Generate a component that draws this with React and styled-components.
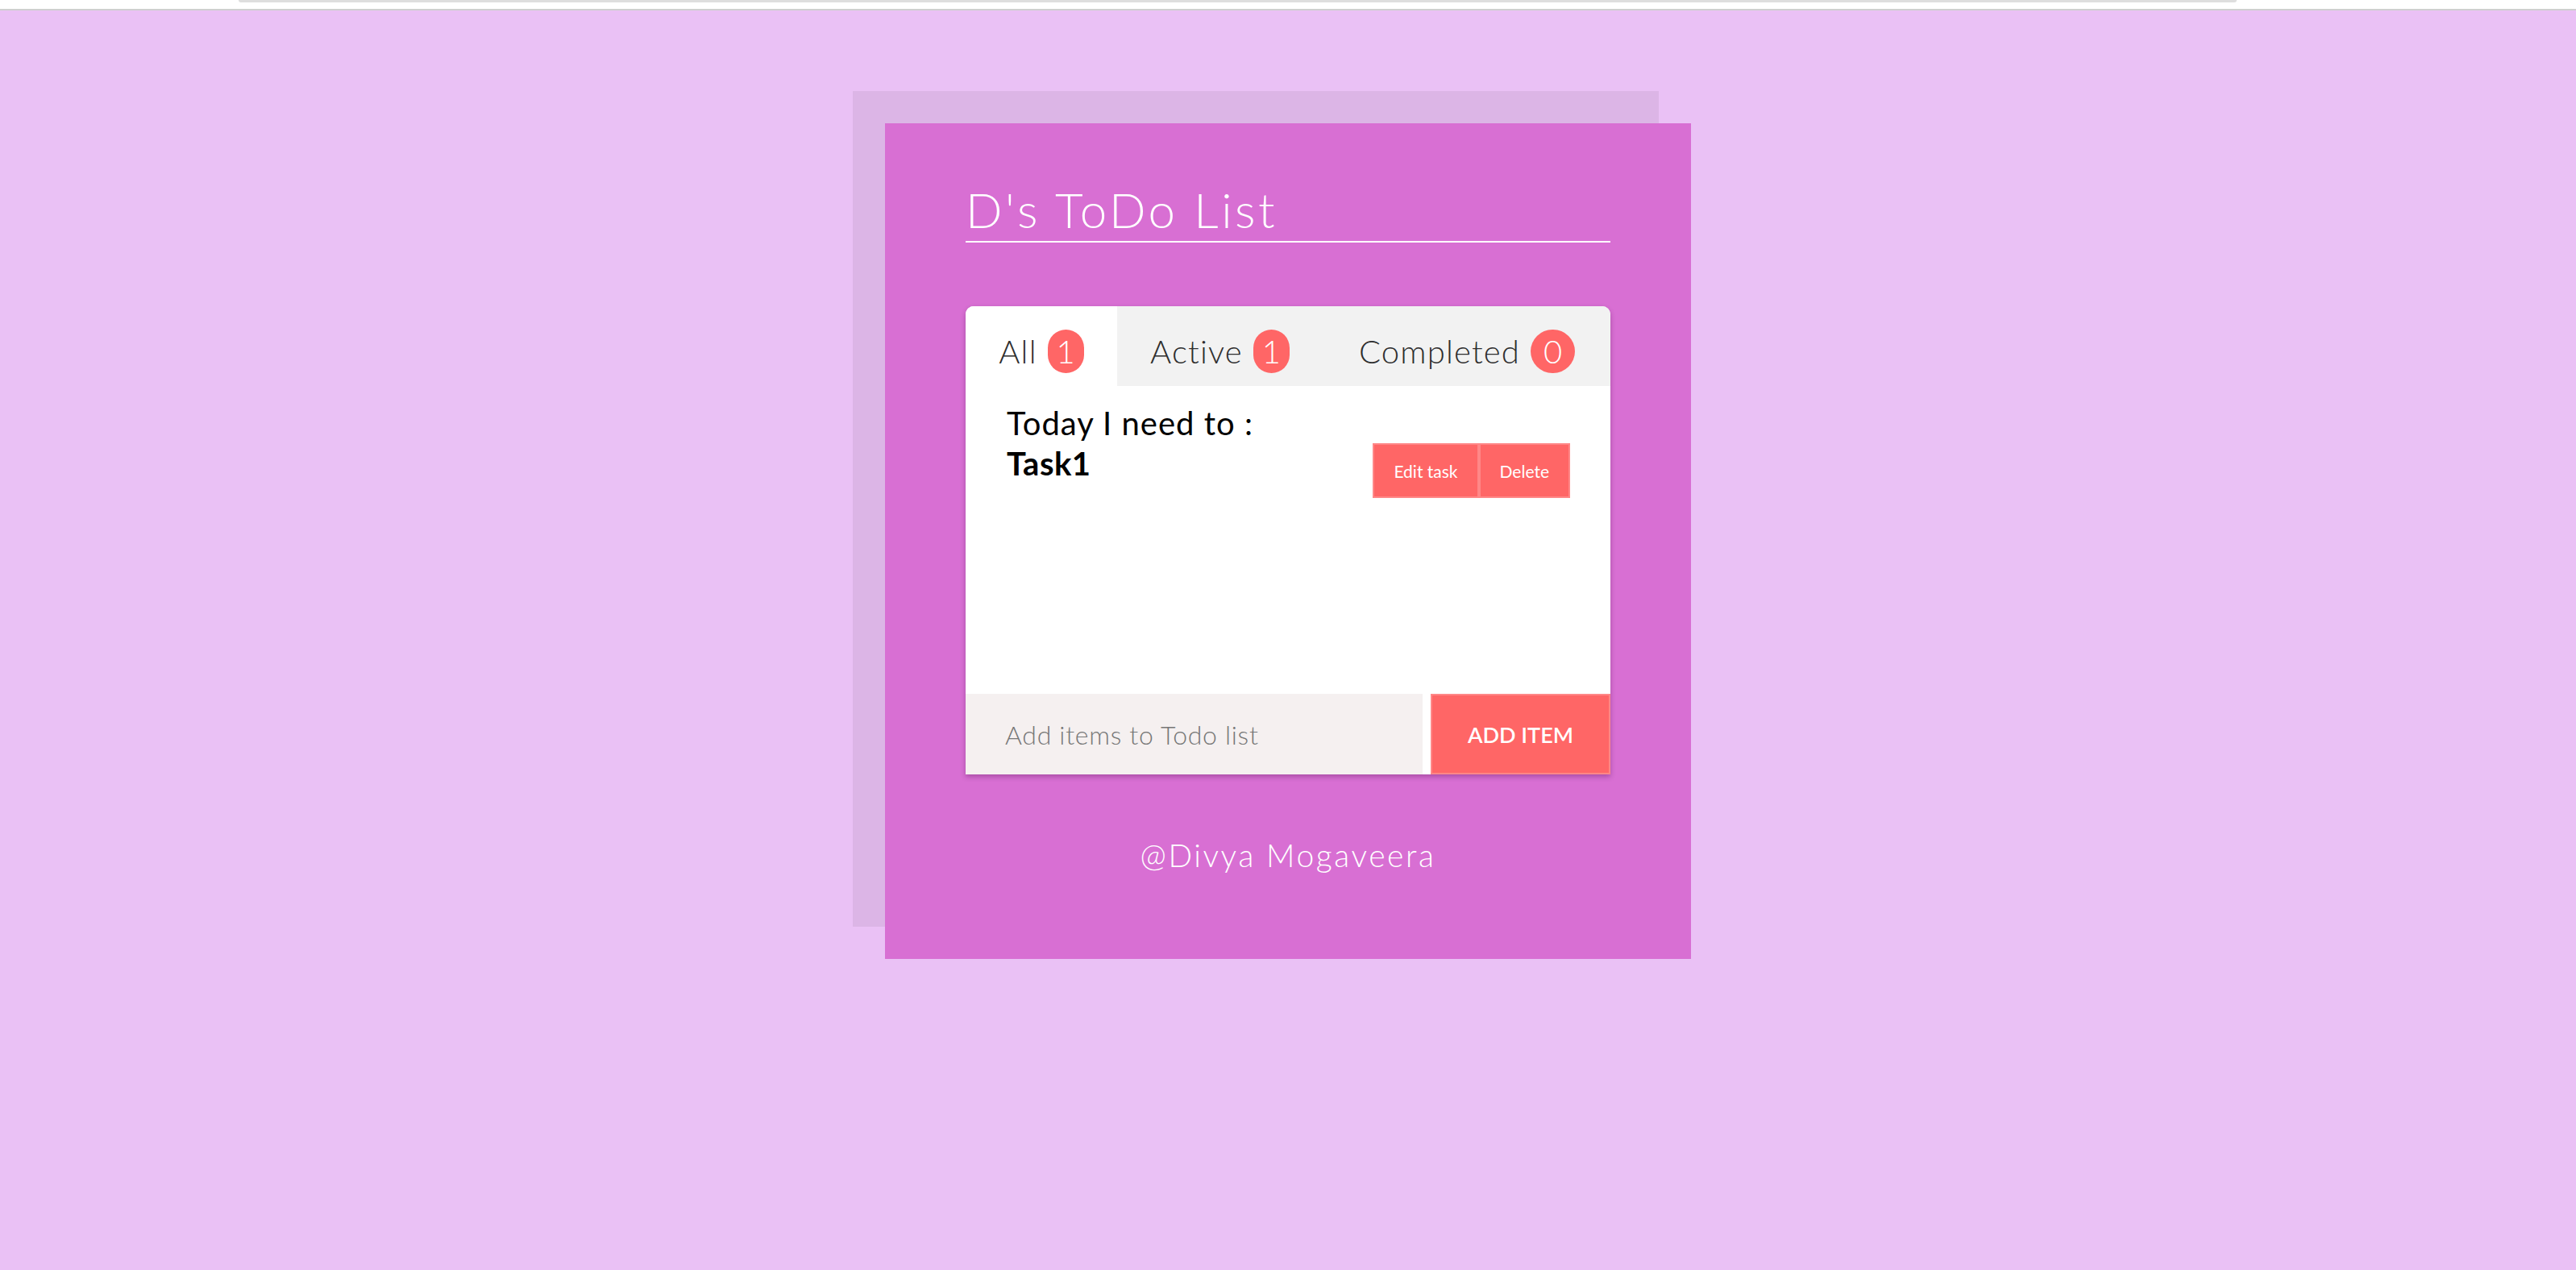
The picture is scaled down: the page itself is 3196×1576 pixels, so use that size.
import React from 'react';
import styled, { createGlobalStyle } from 'styled-components';

const GlobalStyle = createGlobalStyle`
  html, body {
    margin: 0;
    padding: 0;
    background: #eac1f5;
    font-family: Lato, "Noto Sans", sans-serif;
  }
  * {
    box-sizing: border-box;
  }
`;

// Styled Components
const TopStrip = styled.div`
  height: 13px;
  background: #ffffff;
  border-bottom: 2px solid #cfcfcf;
`;

const BrowserBar = styled.div`
  margin-left: 296px;
  width: 2479px;
  height: 3px;
  background: #dedede;
  border-radius: 0 0 8px 8px;
`;

const Page = styled.div`
  padding-top: 140px;
  padding-bottom: 200px;
  display: flex;
  justify-content: center;
`;

const Card = styled.div`
  width: 1000px;
  padding: 72px 100px 105px;
  background: #d86fd3;
  box-shadow: -40px -40px 0 0 #dcb5e6;
`;

const Title = styled.h1`
  margin: 0;
  padding-bottom: 4px;
  font-size: 60px;
  line-height: 70px;
  font-weight: 300;
  letter-spacing: 3.5px;
  color: #ffffff;
  border-bottom: 2px solid #ffffff;
`;

const TodoBox = styled.div`
  margin-top: 79px;
  background: #ffffff;
  border-radius: 10px 10px 0 0;
  box-shadow: 0 3px 6px rgba(60, 0, 60, 0.3);
`;

const TabList = styled.div`
  display: flex;
  height: 99px;
  background: #f2f2f2;
  border-radius: 10px 10px 0 0;
  overflow: hidden;
`;

const Tab = styled.div`
  flex: none;
  width: ${props => props.width}px;
  display: flex;
  align-items: center;
  justify-content: center;
  padding-top: 12px;
  background: ${props => (props.selected ? '#ffffff' : 'transparent')};
  font-size: 40px;
  font-weight: 300;
  letter-spacing: 1.2px;
  color: #2e2e2e;
`;

const Badge = styled.span`
  display: inline-flex;
  align-items: center;
  justify-content: center;
  margin-left: 13px;
  width: ${props => (props.round ? 55 : 45)}px;
  height: 54px;
  border-radius: 27px;
  background: #ff6666;
  color: #ffffff;
  font-size: 40px;
  font-weight: 300;
  letter-spacing: 0;
`;

const TabPanel = styled.div`
  height: 382px;
  padding: 21px 50px 0 51px;
`;

const TaskRow = styled.div`
  display: flex;
  justify-content: space-between;
  align-items: flex-start;
`;

const TaskText = styled.div`
  font-size: 40px;
  line-height: 50px;
  letter-spacing: 1px;
  color: #000000;
  & > strong {
    display: block;
    font-weight: 700;
    letter-spacing: 0.5px;
  }
`;

const Actions = styled.div`
  display: flex;
  margin-top: 50px;
`;

const SmallButton = styled.button`
  height: 68px;
  padding: 0 ${props => props.pad}px;
  border: 2px solid #ff8787;
  background: #ff6666;
  color: #ffffff;
  font-family: Lato, "Noto Sans", sans-serif;
  font-size: 21px;
  font-weight: 400;
  cursor: pointer;
`;

const AddForm = styled.form`
  display: flex;
  height: 100px;
`;

const AddInput = styled.input`
  flex: 1;
  margin-right: 10px;
  padding: 0 0 0 49px;
  border: none;
  outline: none;
  background: #f5f0f0;
  font-family: Lato, "Noto Sans", sans-serif;
  font-size: 32px;
  font-weight: 300;
  letter-spacing: 0.7px;
  color: #333333;
  &::placeholder {
    color: #777777;
  }
`;

const AddButton = styled.button`
  width: 223px;
  border: 2px solid #ff8787;
  background: #ff6666;
  color: #ffffff;
  font-family: Lato, "Noto Sans", sans-serif;
  font-size: 27px;
  font-weight: 600;
  cursor: pointer;
`;

const Footer = styled.p`
  margin: 76px 0 0;
  text-align: center;
  font-size: 39px;
  line-height: 48px;
  font-weight: 300;
  letter-spacing: 2.6px;
  color: #ffffff;
`;

const tabs = [
  { label: 'All', count: 1, width: 188 },
  { label: 'Active', count: 1, width: 255 },
  { label: 'Completed', count: 0, width: 358 },
];

// Component
export default function App() {
  return (
    <>
      <GlobalStyle />
      <TopStrip>
        <BrowserBar />
      </TopStrip>
      <Page>
        <Card>
          <Title>D's ToDo List</Title>
          <TodoBox>
            <TabList>
              {tabs.map((tab, i) => (
                <Tab key={tab.label} width={tab.width} selected={i === 0}>
                  {tab.label}
                  <Badge round={tab.count === 0}>{tab.count}</Badge>
                </Tab>
              ))}
            </TabList>
            <TabPanel>
              <TaskRow>
                <TaskText>
                  Today I need to :
                  <strong>Task1</strong>
                </TaskText>
                <Actions>
                  <SmallButton type="button" pad={24}>Edit task</SmallButton>
                  <SmallButton type="button" pad={24}>Delete</SmallButton>
                </Actions>
              </TaskRow>
            </TabPanel>
            <AddForm onSubmit={e => e.preventDefault()}>
              <AddInput placeholder="Add items to Todo list" />
              <AddButton type="submit">ADD ITEM</AddButton>
            </AddForm>
          </TodoBox>
          <Footer>@Divya Mogaveera</Footer>
        </Card>
      </Page>
    </>
  );
}
